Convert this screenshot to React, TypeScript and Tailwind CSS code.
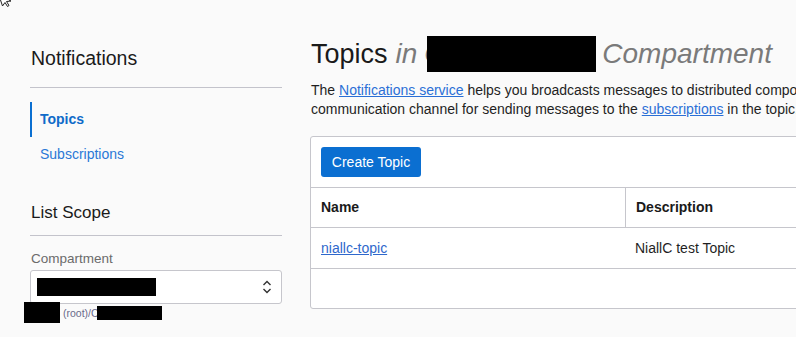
import React from "react";

function Cursor() {
  return (
    <svg className="absolute left-0 top-0" width="14" height="9" viewBox="0 0 14 9">
      <path d="M0.5 0 L2.5 6 L5 2.5 L7.5 6.5 L9 5.5 L6.5 1.5 L11 1 L9 0" fill="#fff" stroke="#222" strokeWidth="1" />
    </svg>
  );
}

function Chevrons() {
  return (
    <svg width="10" height="14" viewBox="0 0 10 14" className="shrink-0">
      <path d="M1.5 5 L5 1.5 L8.5 5" fill="none" stroke="#333" strokeWidth="1.4" />
      <path d="M1.5 9 L5 12.5 L8.5 9" fill="none" stroke="#333" strokeWidth="1.4" />
    </svg>
  );
}

export default function App() {
  return (
    <div
      className="relative flex w-[796px] h-[337px] overflow-hidden bg-[#fafafa] text-[#161513]"
      style={{ fontFamily: '"Liberation Sans", Arial, sans-serif' }}
    >
      <Cursor />
      {/* Sidebar */}
      <div className="ml-[30px] w-[252px] shrink-0 flex flex-col pt-[46px]">
        <div className="text-[19.5px] leading-[24px] pl-px text-[#1a1a1a]">Notifications</div>
        <div className="mt-[17px] border-t border-[#c3c3cb]" />
        <div className="mt-[14px] flex flex-col">
          <div className="h-[35px] flex items-center border-l-2 border-[#0a6fd1] pl-[8px] text-[14px] font-bold text-[#0f6bc9]">
            Topics
          </div>
          <div className="h-[35px] flex items-center pl-[10px] text-[14px] text-[#2a78d6]">
            Subscriptions
          </div>
        </div>
        <div className="mt-[29px] text-[17px] leading-[24px] pl-px text-[#1a1a1a]">List Scope</div>
        <div className="mt-[10px] border-t border-[#c3c3cb]" />
        <div className="mt-[13px] text-[13.5px] leading-[20px] pl-px text-[#6b6b6b]">Compartment</div>
        <div className="mt-[1px] h-[34px] border border-[#c6c6cc] rounded-[3px] bg-white flex items-center justify-between pl-[6px] pr-[9px]">
          <div className="w-[119px] h-[18px] bg-black" />
          <Chevrons />
        </div>
        <div className="-mt-[2px] -ml-[6px] flex items-start">
          <div className="w-[36px] h-[21px] bg-black shrink-0" />
          <div className="ml-[3px] mt-[4px] flex items-center">
            <span className="text-[10.5px] leading-[14px] text-[#6a6a8a]">(root)/C</span>
            <div className="-ml-[2px] w-[65px] h-[14px] bg-black" />
          </div>
        </div>
      </div>

      {/* Main */}
      <div className="ml-[28px] flex flex-col pt-[36px] w-[700px] shrink-0">
        <div className="h-[36px] flex items-center text-[27px] leading-[32px] whitespace-nowrap">
          <span className="text-[#1a1a1a] pl-px">Topics</span>
          <span className="ml-[8px] italic text-[28px] text-[#7a7a7a]">in</span>
          <span className="ml-[7px] italic text-[28px] text-[#7a7a7a] inline-block w-[3px] overflow-hidden">C</span>
          <div className="w-[169px] h-[36px] bg-black shrink-0" />
          <span className="ml-[6px] italic text-[28px] text-[#7a7a7a]">Compartment</span>
        </div>
        <div className="mt-[9px] text-[14px] leading-[19px] text-[#1f1f1f] pl-px whitespace-nowrap">
          <div>
            The <span className="text-[#2a6fd6] underline">Notifications service</span> helps you broadcasts
            messages to distributed components using a publish-subscribe pattern. A topic is a
          </div>
          <div>
            communication channel for sending messages to the{" "}
            <span className="text-[#2a6fd6] underline">subscriptions</span> in the topic.
          </div>
        </div>
        <div className="mt-[17px] border border-[#c6c6cc] rounded-[3px] bg-white">
          <div className="p-[10px]">
            <button className="h-[30px] w-[100px] rounded-[3px] bg-[#0b6fd1] text-white text-[14px]">
              Create Topic
            </button>
          </div>
          <div className="flex h-[40px] border-t border-[#c6c6cc] text-[14px] font-bold text-[#1a1a1a]">
            <div className="w-[315px] border-r border-[#c6c6cc] flex items-center pl-[10px]">Name</div>
            <div className="flex items-center pl-[10px]">Description</div>
          </div>
          <div className="flex h-[41px] border-t border-[#c6c6cc] text-[14px]">
            <div className="w-[315px] flex items-center pl-[10px] text-[#2f68cc] underline">niallc-topic</div>
            <div className="flex items-center pl-[9px] text-[#1f1f1f]">NiallC test Topic</div>
          </div>
          <div className="h-[40px] border-t border-[#c6c6cc]" />
        </div>
      </div>
    </div>
  );
}
